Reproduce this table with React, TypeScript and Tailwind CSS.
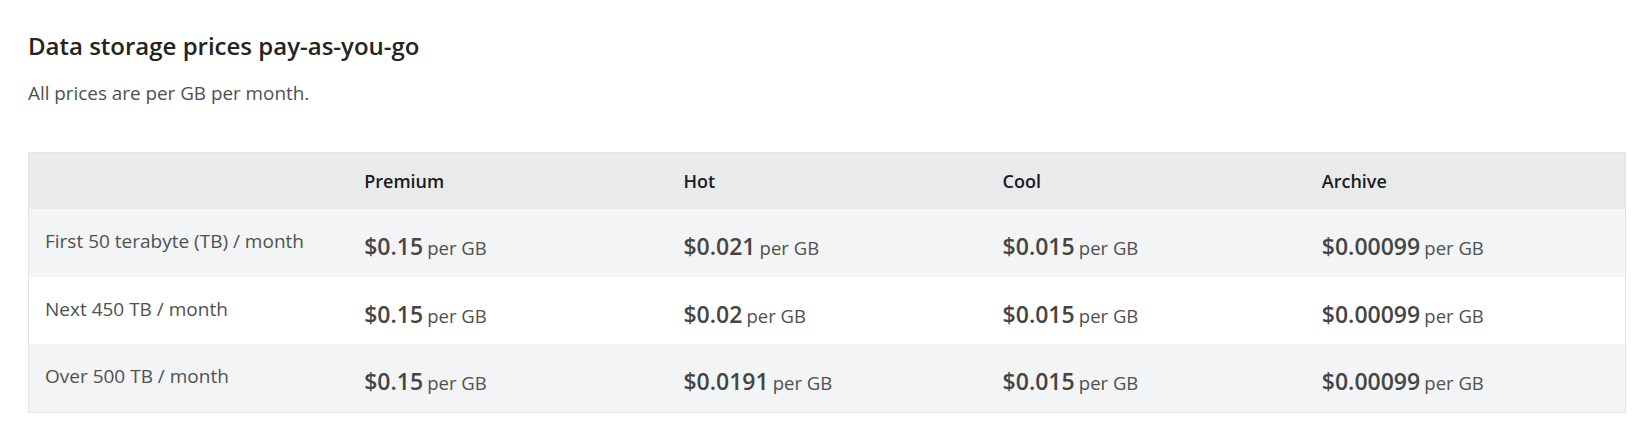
import React from "react";

const tiers = ["Premium", "Hot", "Cool", "Archive"];

const rows: { label: string; prices: string[]; bg: string; h: string }[] = [
  { label: "First 50 terabyte (TB) / month", prices: ["$0.15", "$0.021", "$0.015", "$0.00099"], bg: "bg-[#f3f4f5]", h: "h-[68px]" },
  { label: "Next 450 TB / month", prices: ["$0.15", "$0.02", "$0.015", "$0.00099"], bg: "bg-white", h: "h-[67px]" },
  { label: "Over 500 TB / month", prices: ["$0.15", "$0.0191", "$0.015", "$0.00099"], bg: "bg-[#f3f4f5]", h: "h-[68px]" },
];

export default function App() {
  return (
    <div
      className="min-h-[441px] bg-white pl-[28px] pr-[26px] pt-[30px]"
      style={{ fontFamily: '"Open Sans", "Noto Sans", sans-serif' }}
    >
      <h2 className="text-[24px] font-semibold leading-[32px] text-[#242424]">
        Data storage prices pay-as-you-go
      </h2>
      <p className="mt-[18px] text-[18.85px] leading-[26px] text-[#505050]">
        All prices are per GB per month.
      </p>
      <div className="mt-[46px] border border-[#e4e4e4]">
        <div className="grid h-[56px] grid-cols-5 items-center bg-[#e9eaec]">
          <div />
          {tiers.map((t) => (
            <div key={t} className="px-4 text-[18px] font-semibold leading-[24px] text-[#1b1b1b]">
              {t}
            </div>
          ))}
        </div>
        {rows.map((r) => (
          <div key={r.label} className={`grid grid-cols-5 items-start ${r.bg} ${r.h}`}>
            <div className="px-4 pt-[20px] text-[19px] leading-[25px] text-[#505050]">{r.label}</div>
            {r.prices.map((p, i) => (
              <div key={i} className="px-4 pt-[22px] leading-[30px]">
                <span className="text-[23px] font-semibold text-[#454545]">{p}</span>{" "}
                <span className="text-[18.5px] text-[#505050]">per GB</span>
              </div>
            ))}
          </div>
        ))}
      </div>
    </div>
  );
}
